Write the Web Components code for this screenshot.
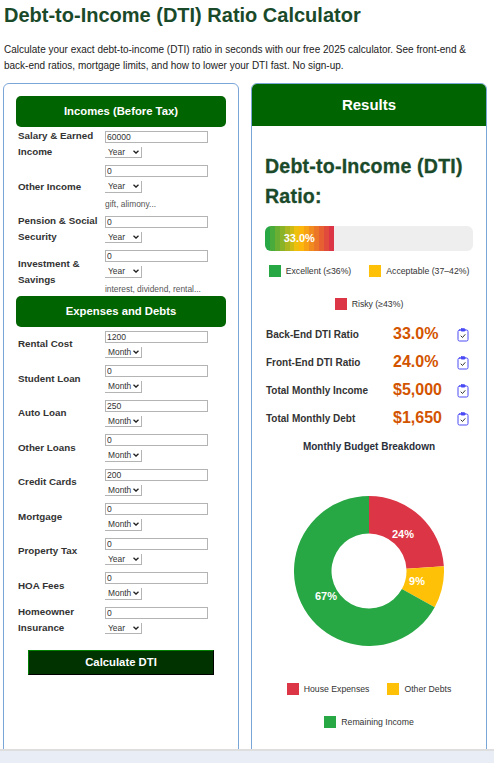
<!DOCTYPE html>
<html lang="en">
<head>
<meta charset="utf-8">
<title>DTI Ratio Calculator</title>
<style>
    html, body { margin: 0; padding: 0; height: 100%; overflow: hidden; }
    body { background: #e9edf5; font-family: "Liberation Sans", Arial, sans-serif; }
</style>
</head>
<body>
<dti-page>
    <dti-form-card slot="left">
        <dti-head>Incomes (Before Tax)</dti-head>
        <dti-field label="Salary &amp; Earned Income" value="60000" period="Year"></dti-field>
        <dti-field label="Other Income" value="0" period="Year" hint="gift, alimony..."></dti-field>
        <dti-field label="Pension &amp; Social Security" value="0" period="Year"></dti-field>
        <dti-field label="Investment &amp; Savings" value="0" period="Year" hint="interest, dividend, rental..."></dti-field>
        <dti-head class="next">Expenses and Debts</dti-head>
        <dti-field label="Rental Cost" value="1200" period="Month"></dti-field>
        <dti-field label="Student Loan" value="0" period="Month"></dti-field>
        <dti-field label="Auto Loan" value="250" period="Month"></dti-field>
        <dti-field label="Other Loans" value="0" period="Month"></dti-field>
        <dti-field label="Credit Cards" value="200" period="Month"></dti-field>
        <dti-field label="Mortgage" value="0" period="Month"></dti-field>
        <dti-field label="Property Tax" value="0" period="Year"></dti-field>
        <dti-field label="HOA Fees" value="0" period="Month"></dti-field>
        <dti-field label="Homeowner Insurance" value="0" period="Year"></dti-field>
        <dti-button>Calculate DTI</dti-button>
    </dti-form-card>
    <dti-results slot="right">
        <dti-bar percent="33" text="33.0%"></dti-bar>
        <dti-legend class="top">
            <dti-key color="#28a745">Excellent (≤36%)</dti-key>
            <dti-key color="#ffc107">Acceptable (37–42%)</dti-key>
            <dti-key color="#dc3545">Risky (≥43%)</dti-key>
        </dti-legend>
        <dti-metric label="Back-End DTI Ratio" value="33.0%"></dti-metric>
        <dti-metric label="Front-End DTI Ratio" value="24.0%"></dti-metric>
        <dti-metric label="Total Monthly Income" value="$5,000"></dti-metric>
        <dti-metric label="Total Monthly Debt" value="$1,650"></dti-metric>
        <dti-donut></dti-donut>
        <dti-legend>
            <dti-key color="#dc3545">House Expenses</dti-key>
            <dti-key color="#ffc107">Other Debts</dti-key>
            <dti-key color="#28a745">Remaining Income</dti-key>
        </dti-legend>
    </dti-results>
</dti-page>

<script>
class DtiPage extends HTMLElement {
    constructor() {
        super()
        this.attachShadow({ mode: 'open' })
        this.shadowRoot.innerHTML = `
            <style>
                :host { display: block; height: 749px; overflow: hidden; background: #fff; border-bottom: 2px solid #dedede; }
                h1 { margin: 0; padding: 4px 0 0 4px; font-size: 20px; line-height: 23px; font-weight: 700; color: #1a4a2a; }
                p { margin: 0; padding: 15px 0 0 4px; font-size: 10px; line-height: 16px; color: #222; width: 480px; }
                .cols { display: grid; grid-template-columns: 236px 236px; column-gap: 12px; padding: 9px 0 0 3px; }
            </style>
            <h1>Debt-to-Income (DTI) Ratio Calculator</h1>
            <p>Calculate your exact debt-to-income (DTI) ratio in seconds with our free 2025 calculator. See front-end &amp; back-end ratios, mortgage limits, and how to lower your DTI fast. No sign-up.</p>
            <div class="cols"><slot name="left"></slot><slot name="right"></slot></div>
        `
    }
}

class DtiFormCard extends HTMLElement {
    constructor() {
        super()
        this.attachShadow({ mode: 'open' })
        this.shadowRoot.innerHTML = `
            <style>
                :host { display: block; box-sizing: border-box; height: 672px; background: #fff; border: 1px solid #7ba6d8; border-radius: 6px; padding: 12px 12px 0 12px; }
            </style>
            <slot></slot>
        `
    }
}

class DtiHead extends HTMLElement {
    constructor() {
        super()
        this.attachShadow({ mode: 'open' })
        this.shadowRoot.innerHTML = `
            <style>
                :host { display: block; height: 30.5px; line-height: 30px; margin-bottom: 4px; background: #006400; border-radius: 5px; color: #fff; font-size: 11.3px; font-weight: 700; text-align: center; }
                :host(.next) { margin-top: -4.5px; }
            </style>
            <slot></slot>
        `
    }
}

class DtiField extends HTMLElement {
    constructor() {
        super()
        this.attachShadow({ mode: 'open' })
    }

    connectedCallback() {
        const period = this.getAttribute('period')
        const hint = this.getAttribute('hint')
        this.shadowRoot.innerHTML = `
            <style>
                :host { display: grid; grid-template-columns: 87px 104px; padding-left: 2px; padding-bottom: 7px; align-items: center; font-size: 9.8px; color: #333; }
                label { font-weight: 700; line-height: 16px; margin: -4px 0; }
                .ctl { display: flex; flex-direction: column; align-items: flex-start; }
                input { box-sizing: border-box; width: 103px; height: 12px; margin: 0 0 4px; padding: 0 1px; border: 1px solid #b4b4b4; background: #fff; font: 8.6px "Liberation Sans", Arial, sans-serif; color: #333; outline: 0; }
                .pick { position: relative; display: block; width: 37px; height: 11.5px; }
                select { appearance: none; -webkit-appearance: none; display: block; box-sizing: border-box; width: 37px; height: 11.5px; margin: 0; padding: 0 0 0 3px; border: 0; border-right: 1px solid #b4b4b4; border-bottom: 1px solid #b4b4b4; border-radius: 0; background: #fff; font: 8.4px "Liberation Sans", Arial, sans-serif; color: #333; outline: 0; }
                svg { position: absolute; left: 28px; top: 3px; pointer-events: none; }
                small { display: block; height: 16px; line-height: 15px; padding-top: 4px; box-sizing: border-box; font-size: 8.4px; color: #555; }
            </style>
            <label>${this.getAttribute('label').replace(/&/g, '&amp;')}</label>
            <div class="ctl">
                <input type="text" value="${this.getAttribute('value')}">
                <span class="pick">
                    <select><option>${period}</option><option>${period === 'Year' ? 'Month' : 'Year'}</option></select>
                    <svg width="6" height="4" viewBox="0 0 6 4" fill="none" stroke="#222" stroke-width="1.3"><path d="M.5 .7L3 3L5.5 .7"/></svg>
                </span>
                ${hint ? `<small>${hint}</small>` : ''}
            </div>
        `
    }
}

class DtiButton extends HTMLElement {
    constructor() {
        super()
        this.attachShadow({ mode: 'open' })
        this.shadowRoot.innerHTML = `
            <style>
                :host { display: block; box-sizing: border-box; width: 186px; height: 25px; margin: 8.5px 0 0 12px; line-height: 22px; background: #003300; border: 1px solid; border-color: #008000 #000 #000 #008000; color: #fff; font-size: 11.3px; font-weight: 700; text-align: center; }
            </style>
            <slot></slot>
        `
    }
}

class DtiResults extends HTMLElement {
    constructor() {
        super()
        this.attachShadow({ mode: 'open' })
        this.shadowRoot.innerHTML = `
            <style>
                :host { display: block; box-sizing: border-box; height: 672px; background: #fff; border: 1px solid #7ba6d8; border-radius: 6px; overflow: hidden; }
                header { height: 42px; line-height: 41px; background: #006400; color: #fff; font-size: 15px; font-weight: 700; text-align: center; }
                .body { padding: 25px 13px 0 13px; }
                h2 { margin: 0 0 15px; font-size: 19.6px; line-height: 30px; font-weight: 700; color: #1a4a2a; letter-spacing: .2px; -webkit-text-stroke: .3px #1a4a2a; white-space: nowrap; }
            </style>
            <header>Results</header>
            <div class="body">
                <h2>Debt-to-Income (DTI)<br>Ratio:</h2>
                <slot></slot>
            </div>
        `
    }
}

class DtiBar extends HTMLElement {
    constructor() {
        super()
        this.attachShadow({ mode: 'open' })
    }

    connectedCallback() {
        // the fill is drawn in flat bands, from green over yellow to red
        const bands = []
        const stops = [[40, 167, 69], [255, 193, 7], [220, 53, 69]]
        for (let i = 0; i < 14; i++) {
            const t = i / 13 * 2
            const k = Math.min(Math.floor(t), 1)
            const f = t - k
            const c = stops[k].map((v, n) => Math.round(v + (stops[k + 1][n] - v) * f))
            bands.push(`<i style="background:rgb(${c.join(',')})"></i>`)
        }
        this.shadowRoot.innerHTML = `
            <style>
                :host { display: block; width: 208px; height: 25px; background: #eee; border-radius: 6px; overflow: hidden; position: relative; }
                .fill { display: flex; height: 100%; width: ${this.getAttribute('percent')}%; }
                i { flex: 1; }
                span { position: absolute; left: 0; top: 0; width: ${this.getAttribute('percent')}%; line-height: 25px; text-align: center; color: #fff; font-size: 11px; font-weight: 700; }
            </style>
            <div class="fill">${bands.join('')}</div>
            <span>${this.getAttribute('text')}</span>
        `
    }
}

class DtiLegend extends HTMLElement {
    constructor() {
        super()
        this.attachShadow({ mode: 'open' })
        this.shadowRoot.innerHTML = `
            <style>
                :host { display: flex; flex-wrap: wrap; justify-content: center; column-gap: 18px; row-gap: 21px; width: 208px; }
                :host(.top) { padding: 14px 0 10px; }
            </style>
            <slot></slot>
        `
    }
}

class DtiKey extends HTMLElement {
    constructor() {
        super()
        this.attachShadow({ mode: 'open' })
    }

    connectedCallback() {
        this.shadowRoot.innerHTML = `
            <style>
                :host { display: flex; align-items: center; gap: 5px; height: 12px; font-size: 8.7px; color: #333; white-space: nowrap; }
                b { width: 12px; height: 12px; background: ${this.getAttribute('color')}; }
            </style>
            <b></b><slot></slot>
        `
    }
}

class DtiMetric extends HTMLElement {
    constructor() {
        super()
        this.attachShadow({ mode: 'open' })
    }

    connectedCallback() {
        this.shadowRoot.innerHTML = `
            <style>
                :host { display: grid; grid-template-columns: 127px 64px 12px; align-items: center; height: 28px; padding-left: 1px; }
                .label { font-size: 10px; font-weight: 700; color: #333; }
                .value { font-size: 16px; font-weight: 700; color: #d35400; }
                svg { display: block; margin-top: 2px; }
            </style>
            <span class="label">${this.getAttribute('label')}</span>
            <span class="value">${this.getAttribute('value')}</span>
            <svg width="12" height="14" viewBox="0 0 12 14" fill="none" stroke="#4a4af5" stroke-width="1" stroke-linecap="round" stroke-linejoin="round">
                <rect x="1" y="2" width="10" height="11" rx="1.5"/>
                <rect x="4" y=".8" width="4" height="2.2" rx=".6" fill="#4a4af5"/>
                <path d="M4 8l1.5 1.5L8 6.6" stroke="#333"/>
            </svg>
        `
    }
}

class DtiDonut extends HTMLElement {
    constructor() {
        super()
        this.attachShadow({ mode: 'open' })
        const cx = 75, cy = 75, r = 75, inner = 37.5
        const slices = [[.24, '#dc3545'], [.09, '#ffc107'], [.67, '#28a745']]
        let from = 0
        const point = (a, d) => (cx + Math.sin(a) * d).toFixed(2) + ' ' + (cy - Math.cos(a) * d).toFixed(2)
        const paths = slices.map(([part, color]) => {
            const a0 = from * Math.PI * 2
            const a1 = (from + part) * Math.PI * 2
            const big = part > .5 ? 1 : 0
            from += part
            return `<path fill="${color}" d="M${point(a0, r)}A${r} ${r} 0 ${big} 1 ${point(a1, r)}L${point(a1, inner)}A${inner} ${inner} 0 ${big} 0 ${point(a0, inner)}Z"/>`
        }).join('')
        this.shadowRoot.innerHTML = `
            <style>
                :host { display: block; width: 208px; padding-top: 9px; }
                h3 { margin: 0; font-size: 10px; line-height: 12px; font-weight: 700; color: #2b2f3a; text-align: center; }
                svg { display: block; margin: 43px auto 37px; }
                text { font: 700 11px "Liberation Sans", Arial, sans-serif; fill: #fff; text-anchor: middle; }
            </style>
            <h3>Monthly Budget Breakdown</h3>
            <svg width="150" height="150" viewBox="0 0 150 150">
                ${paths}
                <text x="109" y="42">24%</text>
                <text x="123" y="89">9%</text>
                <text x="32" y="104">67%</text>
            </svg>
        `
    }
}

customElements.define('dti-page', DtiPage)
customElements.define('dti-form-card', DtiFormCard)
customElements.define('dti-head', DtiHead)
customElements.define('dti-field', DtiField)
customElements.define('dti-button', DtiButton)
customElements.define('dti-results', DtiResults)
customElements.define('dti-bar', DtiBar)
customElements.define('dti-legend', DtiLegend)
customElements.define('dti-key', DtiKey)
customElements.define('dti-metric', DtiMetric)
customElements.define('dti-donut', DtiDonut)
</script>
</body>
</html>
